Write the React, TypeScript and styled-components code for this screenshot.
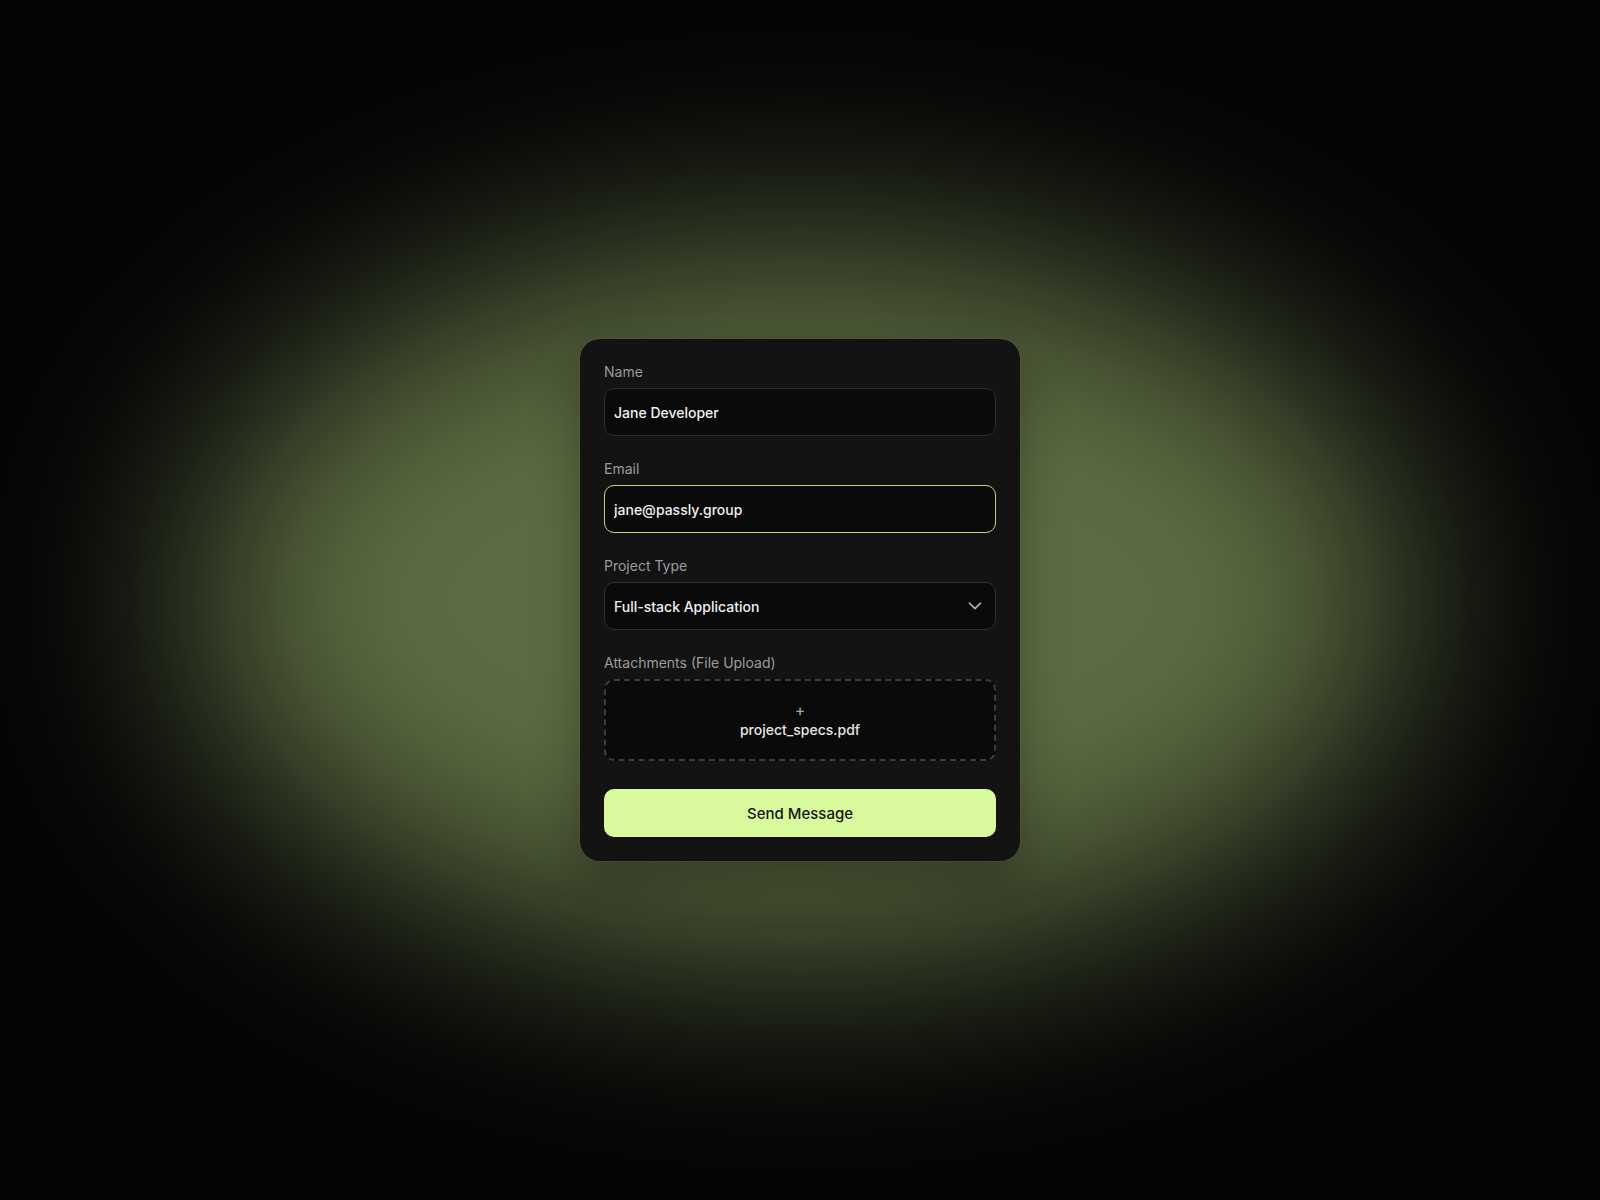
import styled, { createGlobalStyle } from 'styled-components';

const GlobalStyle = createGlobalStyle`
  * { box-sizing: border-box; }
  body {
    margin: 0;
    background: #050505;
    font-family: Inter, "Noto Sans", "Liberation Sans", sans-serif;
    -webkit-font-smoothing: antialiased;
  }
`;

const fields = [
  { label: 'Name', value: 'Jane Developer', focused: false },
  { label: 'Email', value: 'jane@passly.group', focused: true },
];

function App() {
  return (
    <Page>
      <GlobalStyle />
      <Card>
        <Form onSubmit={(e) => e.preventDefault()}>
          {fields.map((f) => (
            <Field key={f.label}>
              <Label>{f.label}</Label>
              <TextInput defaultValue={f.value} $focused={f.focused} />
            </Field>
          ))}
          <Field>
            <Label>Project Type</Label>
            <SelectBox>
              <span>Full-stack Application</span>
              <svg width="14" height="8" viewBox="0 0 14 8" fill="none">
                <path
                  d="M1.5 1.2l5.5 5.5 5.5-5.5"
                  stroke="#a8a8a8"
                  strokeWidth="1.8"
                  strokeLinecap="round"
                  strokeLinejoin="round"
                />
              </svg>
            </SelectBox>
          </Field>
          <Field>
            <Label>Attachments (File Upload)</Label>
            <DropZone>
              <Plus>+</Plus>
              <FileName>project_specs.pdf</FileName>
            </DropZone>
          </Field>
          <SubmitButton type="submit">Send Message</SubmitButton>
        </Form>
      </Card>
    </Page>
  );
}

export default App;

const Page = styled.div`
  position: relative;
  min-height: 100vh;
  display: flex;
  align-items: center;
  justify-content: center;
  overflow: hidden;
  background: #050505;

  /* soft lime glow behind the card */
  &::before {
    content: '';
    position: absolute;
    left: 50%;
    top: 50%;
    width: 1220px;
    height: 720px;
    transform: translate(-50%, -50%);
    border-radius: 50%;
    background: rgb(92, 108, 66);
    filter: blur(105px);
  }
`;

const Card = styled.div`
  position: relative;
  width: 440px;
  padding: 24px;
  background: #131313;
  border-radius: 20px;
  box-shadow: 0 0 0 1px rgba(255, 255, 255, 0.04),
    0 20px 50px rgba(0, 0, 0, 0.3);
`;

const Form = styled.form`
  display: flex;
  flex-direction: column;
  gap: 24px;
`;

const Field = styled.div`
  display: flex;
  flex-direction: column;
  gap: 8px;
`;

const Label = styled.label`
  font-size: 14px;
  line-height: normal;
  color: #9b9b9b;
`;

const TextInput = styled.input<{ $focused?: boolean }>`
  height: 48px;
  width: 100%;
  padding: 0 9px;
  background: #0a0a0a;
  border: 1px solid ${(p) => (p.$focused ? '#bcd685' : '#2f2f2f')};
  border-radius: 10px;
  color: #f0f0f0;
  font-family: inherit;
  font-size: 14px;
  font-weight: 500;
  outline: none;
`;

const SelectBox = styled.div`
  height: 48px;
  display: flex;
  align-items: center;
  justify-content: space-between;
  padding: 0 13px 0 9px;
  background: #0a0a0a;
  border: 1px solid #2f2f2f;
  border-radius: 10px;
  color: #f0f0f0;
  font-size: 14px;
  font-weight: 500;
  cursor: pointer;
`;

const DropZone = styled.div`
  display: flex;
  flex-direction: column;
  align-items: center;
  gap: 2px;
  padding: 20px;
  background: #0a0a0a;
  border: 2px dashed #3d3d3d;
  border-radius: 10px;
  cursor: pointer;
`;

const Plus = styled.span`
  font-size: 16px;
  line-height: 18px;
  color: #a6a6a6;
`;

const FileName = styled.span`
  font-size: 14px;
  line-height: 18px;
  font-weight: 500;
  color: #e6e6e6;
`;

const SubmitButton = styled.button`
  margin-top: 4px;
  height: 48px;
  width: 100%;
  border: none;
  border-radius: 10px;
  background: #d9f99d;
  color: #161616;
  font-family: inherit;
  font-size: 15px;
  font-weight: 500;
  cursor: pointer;
`;
